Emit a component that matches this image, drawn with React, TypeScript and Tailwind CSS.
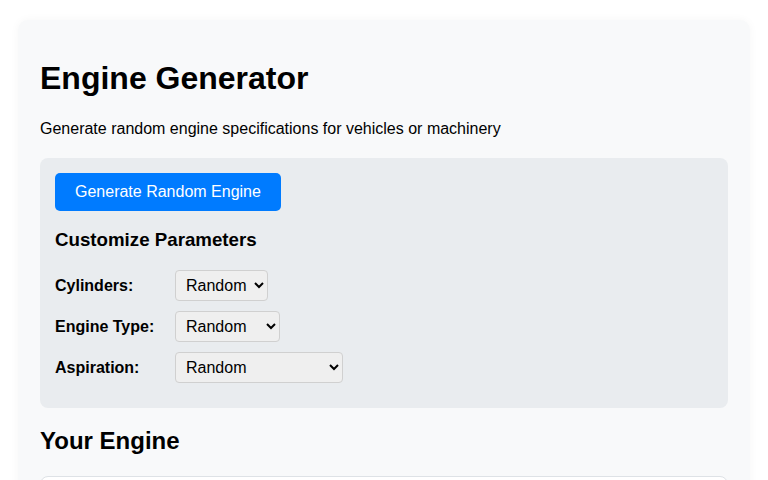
const rows = [
  { label: 'Cylinders:', width: 'w-[93px]' },
  { label: 'Engine Type:', width: 'w-[105px]' },
  { label: 'Aspiration:', width: 'w-[168px]' },
];

export default function App() {
  return (
    <div className="min-h-screen bg-white pt-5 px-[18px] font-['Liberation_Sans',Arial,sans-serif] text-black">
      <div className="bg-[#f8f9fa] rounded-[10px] shadow-[0_0_10px_rgba(0,0,0,0.04)] p-[22px] pt-[40px]">
        <h1 className="text-[32px] leading-[37px] font-bold">Engine Generator</h1>
        <p className="mt-[23px] text-base leading-[18px]">
          Generate random engine specifications for vehicles or machinery
        </p>

        <div className="mt-[20px] bg-[#e9ecef] rounded-lg p-[15px] pb-[25px]">
          <button className="h-[38px] px-5 bg-[#007bff] text-white text-base rounded-[5px]">
            Generate Random Engine
          </button>
          <h3 className="mt-[18px] text-[18.72px] leading-[22px] font-bold">Customize Parameters</h3>
          <div className="mt-[19px] flex flex-col gap-[10px]">
            {rows.map((r) => (
              <div key={r.label} className="flex items-center">
                <label className="w-[120px] font-bold text-base">{r.label}</label>
                <select
                  className={`${r.width} h-[31px] bg-[#efefef] border border-[#d0d0d0] rounded-[4px] pl-[6px] pr-0 text-base`}
                  defaultValue="random"
                >
                  <option value="random">Random</option>
                </select>
              </div>
            ))}
          </div>
        </div>

        <h2 className="mt-[19px] text-2xl leading-[28px] font-bold">Your Engine</h2>
        <div className="mt-[21px] h-[120px] bg-white border border-[#dee2e6] rounded-lg"></div>
      </div>
    </div>
  );
}
